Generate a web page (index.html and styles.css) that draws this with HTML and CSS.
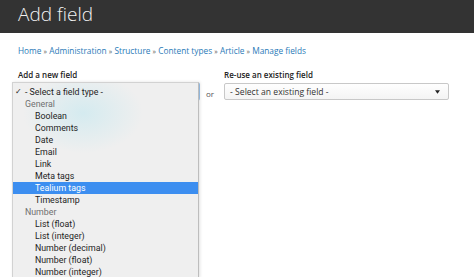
FILE: index.html
```html
<!DOCTYPE html>
<html lang="en">
<head>
<meta charset="utf-8">
<title>Add field</title>
<link rel="stylesheet" href="styles.css">
</head>
<body>
<header class="page-header">
  <h1 class="page-title">Add field</h1>
</header>
<main class="content">
  <nav class="breadcrumb">
    <a href="#">Home</a> <span class="sep">»</span> <a href="#">Administration</a> <span class="sep">»</span> <a href="#">Structure</a> <span class="sep">»</span> <a href="#">Content types</a> <span class="sep">»</span> <a href="#">Article</a> <span class="sep">»</span> <a href="#">Manage fields</a>
  </nav>
  <div class="fields">
    <div class="field field-new">
      <label class="field-label">Add a new field</label>
      <div class="select-wrap">
        <div class="select select-focused"></div>
        <ul class="menu">
          <li class="menu-item checked"><span class="check">✓</span>- Select a field type -</li>
          <li class="menu-group">General</li>
          <li class="menu-item option">Boolean</li>
          <li class="menu-item option">Comments</li>
          <li class="menu-item option">Date</li>
          <li class="menu-item option">Email</li>
          <li class="menu-item option">Link</li>
          <li class="menu-item option">Meta tags</li>
          <li class="menu-item option active">Tealium tags</li>
          <li class="menu-item option">Timestamp</li>
          <li class="menu-group">Number</li>
          <li class="menu-item option">List (float)</li>
          <li class="menu-item option">List (integer)</li>
          <li class="menu-item option">Number (decimal)</li>
          <li class="menu-item option">Number (float)</li>
          <li class="menu-item option">Number (integer)</li>
        </ul>
      </div>
    </div>
    <div class="or">or</div>
    <div class="field field-existing">
      <label class="field-label">Re-use an existing field</label>
      <div class="select select-existing">
        <span class="select-text">- Select an existing field -</span>
        <svg class="arrow" width="6" height="4" viewBox="0 0 6 4"><path d="M0 0H6L3 4Z" fill="#222"/></svg>
      </div>
    </div>
  </div>
</main>
</body>
</html>
```
FILE: styles.css
```css
html, body {
  margin: 0;
  padding: 0;
  background: #fff;
  height: 100%;
  overflow: hidden;
}
body {
  font-family: "Open Sans", "DejaVu Sans", sans-serif;
  color: #222;
}
.page-header {
  background: #333;
  height: 33px;
  padding-left: 18px;
  box-sizing: border-box;
}
.page-title {
  margin: 0;
  font-weight: 300;
  font-size: 19px;
  line-height: 28px;
  color: #f2f2f2;
}
.content {
  padding: 12px 18px 0;
}
.breadcrumb {
  font-size: 8.3px;
  line-height: 12px;
  color: #0a6db6;
}
.breadcrumb a {
  color: #2a7ab8;
  text-decoration: none;
}
.breadcrumb .sep {
  color: #555;
  font-size: 7px;
}
.fields {
  display: flex;
  align-items: flex-start;
  margin-top: 11px;
}
.field {
  display: flex;
  flex-direction: column;
}
.field-label {
  font-size: 8px;
  font-weight: 600;
  line-height: 12px;
  margin-bottom: 2px;
  color: #222;
}
.select-wrap {
  position: relative;
}
.select {
  box-sizing: border-box;
  height: 17px;
  border: 1px solid #c8c8c8;
  border-radius: 2px;
  background: linear-gradient(#fefefe, #f4f4f4);
}
.field-new .select {
  width: 181px;
}
.select-focused {
  border-color: #7fb0e0;
  box-shadow: 0 0 0 1px #9cc4ec;
}
.or {
  font-size: 8px;
  color: #555;
  margin: 19px 10px 0 7px;
}
.select-existing {
  width: 225px;
  display: flex;
  align-items: center;
  justify-content: space-between;
  padding: 0 8px 0 5px;
}
.select-text {
  font-size: 8.6px;
  color: #333;
}
.arrow {
  width: 5px;
  height: 4px;
}
.menu {
  position: absolute;
  left: -6px;
  top: -1px;
  width: 187px;
  height: 196px;
  margin: 0;
  padding: 3px 0 0;
  list-style: none;
  box-sizing: border-box;
  background: #efefef;
  border: 1px solid #d2d2d2;
  border-bottom: 0;
  border-right-color: #bdbdbd;
  box-shadow: 1px 0 3px rgba(0,0,0,0.12);
  font-family: Roboto, "Open Sans", sans-serif;
  font-size: 8.8px;
  background-image: radial-gradient(ellipse 60px 40px at 70px 30px, rgba(195,232,240,0.6), rgba(195,232,240,0));
}
.menu-item, .menu-group {
  height: 12px;
  line-height: 12px;
  padding-left: 12px;
  position: relative;
  white-space: nowrap;
}
.menu-item {
  color: #1e1e1e;
}
.menu-group {
  color: #707070;
}
.menu-item.option {
  padding-left: 22px;
}
.menu-item.active {
  background: #3c8ef0;
  color: #fff;
}
.check {
  position: absolute;
  left: 2px;
  top: 0;
  font-size: 8px;
}
```
